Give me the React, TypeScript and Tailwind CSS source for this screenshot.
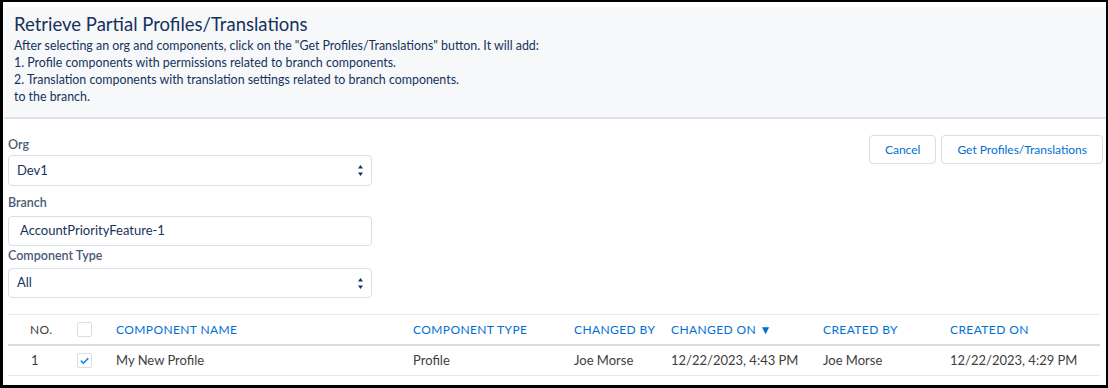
import React from "react";

const font = { fontFamily: "Lato, 'Noto Sans', sans-serif" };

function Arrows() {
  return (
    <svg width="7" height="13" viewBox="0 0 7 13" className="shrink-0">
      <path d="M3.5 1 L6 4.5 L1 4.5 Z" fill="#16325c" />
      <path d="M3.5 12 L6 8.5 L1 8.5 Z" fill="#16325c" />
    </svg>
  );
}

function Checkbox({ checked }: { checked?: boolean }) {
  return (
    <div className="w-[15px] h-[15px] rounded-[2px] border border-[#d8dde6] bg-white flex items-center justify-center">
      {checked && (
        <svg width="9" height="8" viewBox="0 0 9 8">
          <path d="M1.2 4.2 L3.4 6.2 L7.8 1.6" stroke="#1589ee" strokeWidth="1.6" fill="none" strokeLinecap="round" strokeLinejoin="round" />
        </svg>
      )}
    </div>
  );
}

const cols = "grid grid-cols-[61px_39px_297px_161px_97px_152px_127px_1fr]";

export default function App() {
  return (
    <div className="w-[1108px] h-[388px] bg-black pt-[2px] pl-[3px] pr-[2px] pb-[3px]" style={font}>
      <div className="bg-white h-full flex flex-col pt-[5px] pl-[1px]">
        <div className="bg-[#f6f8fa] border-b-2 border-[#dde2ea] pl-[10px] pt-[4px] h-[112px] text-[#16325c]">
          <div className="text-[18.5px] leading-[26px]">Retrieve Partial Profiles/Translations</div>
          <div className="text-[12.4px] leading-[17px]">
            <div>After selecting an org and components, click on the "Get Profiles/Translations" button. It will add:</div>
            <div>1. Profile components with permissions related to branch components.</div>
            <div>2. Translation components with translation settings related to branch components.</div>
            <div>to the branch.</div>
          </div>
        </div>

        <div className="flex justify-between pl-[4px] pr-[3px]">
          <div className="w-[364px] pt-[18px]">
            <div className="text-[12.5px] leading-[16px] font-semibold text-[#4b5a77]">Org</div>
            <div className="mt-[2px] h-[31px] rounded-[4px] border border-[#d8dde6] bg-white flex items-center justify-between pl-[8px] pr-[7px]">
              <span className="text-[13px] text-[#16325c]">Dev1</span>
              <Arrows />
            </div>
            <div className="mt-[9px] text-[12.5px] leading-[16px] font-semibold text-[#4b5a77]">Branch</div>
            <div className="mt-[5px] h-[30px] rounded-[4px] border border-[#d8dde6] bg-white flex items-center pl-[11px]">
              <span className="text-[13px] text-[#16325c]">AccountPriorityFeature-1</span>
            </div>
            <div className="mt-[2px] text-[12.5px] leading-[16px] font-semibold text-[#4b5a77]">Component Type</div>
            <div className="mt-[4px] h-[30px] rounded-[4px] border border-[#d8dde6] bg-white flex items-center justify-between pl-[8px] pr-[7px]">
              <span className="text-[13px] text-[#16325c]">All</span>
              <Arrows />
            </div>
          </div>
          <div className="pt-[16px] flex gap-[5px] items-start">
            <button className="h-[29px] px-[15px] rounded-[4px] border border-[#d8dde6] bg-white text-[12px] text-[#0070d2]">Cancel</button>
            <button className="h-[29px] px-[15px] rounded-[4px] border border-[#d8dde6] bg-white text-[12px] text-[#0070d2]">Get Profiles/Translations</button>
          </div>
        </div>

        <div className="mt-[16px] ml-[4px] w-[1092px] border-t border-[#e5e8ee]">
          <div className={`${cols} h-[31px] items-center text-[12px] tracking-[0.4px] uppercase text-[#0070d2] border-b-2 border-[#d8dbe0]`}>
            <div className="pl-[22px] text-[#3e3e3c]">No.</div>
            <div className="pl-[8px]"><Checkbox /></div>
            <div className="pl-[8px]">Component Name</div>
            <div className="pl-[8px]">Component Type</div>
            <div className="pl-[8px]">Changed By</div>
            <div className="pl-[8px]">Changed On ▼</div>
            <div className="pl-[8px]">Created By</div>
            <div className="pl-[8px]">Created On</div>
          </div>
          <div className={`${cols} h-[30px] items-center text-[13px] text-[#3e3e3c] border-b border-[#e5e8ee]`}>
            <div className="pl-[23px]">1</div>
            <div className="pl-[8px]"><Checkbox checked /></div>
            <div className="pl-[8px]">My New Profile</div>
            <div className="pl-[8px]">Profile</div>
            <div className="pl-[8px]">Joe Morse</div>
            <div className="pl-[8px]">12/22/2023, 4:43 PM</div>
            <div className="pl-[8px]">Joe Morse</div>
            <div className="pl-[8px]">12/22/2023, 4:29 PM</div>
          </div>
        </div>
      </div>
    </div>
  );
}
